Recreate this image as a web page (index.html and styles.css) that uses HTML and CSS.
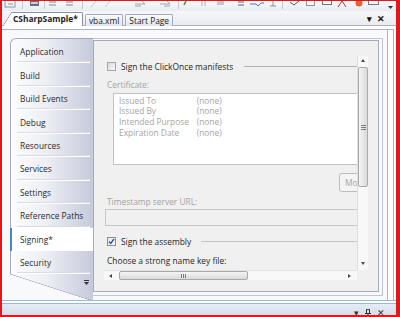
FILE: index.html
```html
<!DOCTYPE html>
<html lang="en">
<head>
  <meta charset="UTF-8">
  <title>CSharpSample - Signing</title>
  <link rel="stylesheet" href="styles.css">
</head>
<body>
<div class="frame">
  <!-- Toolbar (only the lower half is visible) -->
  <div class="toolbar">
    <svg width="394" height="10" viewBox="0 0 394 10">
      <rect x="3" y="-3" width="10" height="9" fill="none" stroke="#8a94a6"/>
      <line x1="6" y1="3" x2="11" y2="3" stroke="#8a94a6"/>
      <line x1="20.5" y1="0" x2="20.5" y2="8" stroke="#c3c7cf"/>
      <rect x="28" y="-2" width="9" height="7" fill="#6b6f7c"/>
      <rect x="29" y="1" width="7" height="2" fill="#c9ced8"/>
      <line x1="42.5" y1="0" x2="42.5" y2="8" stroke="#c3c7cf"/>
      <path d="M47 1h7M47 4h7" stroke="#7d8391"/>
      <path d="M64 1h7M64 4h7" stroke="#7d8391"/>
      <line x1="80.5" y1="0" x2="80.5" y2="8" stroke="#c3c7cf"/>
      <path d="M89 6l5-6M103 6l5-6" stroke="#c4c8d0"/>
      <path d="M133 3h10l-3-3M133 5h6" stroke="#a0a6b0" fill="none"/>
      <path d="M158 3h10l-3-3M162 5h6" stroke="#a0a6b0" fill="none"/>
      <line x1="176.5" y1="0" x2="176.5" y2="8" stroke="#c3c7cf"/>
      <path d="M182 4l2-4" stroke="#2f9a3a" stroke-width="1.5"/>
      <path d="M200 0v5M203 0v5" stroke="#a9adb6"/>
      <rect x="215" y="-1" width="7" height="5" fill="#c3c7d0"/>
      <path d="M236 1h6M236 4h6" stroke="#56606e"/>
      <path d="M248 3h6l2 2 3-3h3" stroke="#4b7cc4" fill="none"/>
      <path d="M271 0v5M268 5h6" stroke="#8b919c"/>
      <line x1="280.5" y1="0" x2="280.5" y2="8" stroke="#c3c7cf"/>
      <path d="M288 1l4 3 5-4" stroke="#4e5562" fill="none"/>
      <rect x="304.5" y="-2.5" width="8" height="7" fill="none" stroke="#8f96a2"/>
      <rect x="320.5" y="-2.5" width="9" height="6" fill="none" stroke="#6d7482"/>
      <path d="M336 6l4-6 4 6" stroke="#b0353a" fill="none"/>
      <circle cx="357" cy="2" r="3.5" fill="#e0622f"/>
      <rect x="366.5" y="-2.5" width="10" height="6" fill="none" stroke="#737a88"/>
      <path d="M386 5h5l-2.5 3z" fill="#333"/>
    </svg>
  </div>

  <!-- Document tabs -->
  <div class="tabstrip">
    <div class="tab active">CSharpSample*</div>
    <div class="tab">vba.xml</div>
    <div class="tab">Start Page</div>
    <div class="tab-tools"><span>▾</span><span>✕</span></div>
  </div>

  <div class="docwin">
    <div class="docedge">
      <div class="docbody">
        <div class="page">
          <nav class="sidebar">
            <div class="tabs">
              <div class="item">Application</div>
              <div class="item">Build</div>
              <div class="item">Build Events</div>
              <div class="item">Debug</div>
              <div class="item">Resources</div>
              <div class="item">Services</div>
              <div class="item">Settings</div>
              <div class="item">Reference Paths</div>
              <div class="item selected">Signing*</div>
              <div class="item">Security</div>
            </div>
            <div class="tail">
              <svg class="more" width="5" height="6" viewBox="0 0 5 6">
                <rect x="0" y="0" width="5" height="1" fill="#333"/>
                <path d="M0 2h5l-2.5 3z" fill="#333"/>
              </svg>
            </div>
          </nav>

          <div class="pane">
            <div class="content">
              <div class="viewport">
                <div class="scroller">
                  <div class="check-row first">
                    <span class="box"></span>
                    <span>Sign the ClickOnce manifests</span>
                    <span class="rule"></span>
                  </div>
                  <div class="field-label">Certificate:</div>
                  <div class="cert">
                    <div class="cert-row"><span class="key">Issued To</span><span>(none)</span></div>
                    <div class="cert-row"><span class="key">Issued By</span><span>(none)</span></div>
                    <div class="cert-row"><span class="key">Intended Purpose</span><span>(none)</span></div>
                    <div class="cert-row"><span class="key">Expiration Date</span><span>(none)</span></div>
                  </div>
                  <div class="more-btn">More Details...</div>
                  <div class="field-label stamp">Timestamp server URL:</div>
                  <div class="textbox"></div>
                  <div class="check-row second">
                    <span class="box checked">
                      <svg width="7" height="7" viewBox="0 0 7 7"><path d="M1 3.5l1.8 2L6 1" fill="none" stroke="#2b56ad" stroke-width="1.4"/></svg>
                    </span>
                    <span>Sign the assembly</span>
                    <span class="rule light"></span>
                  </div>
                  <div class="field-label dark">Choose a strong name key file:</div>
                </div>
              </div>

              <div class="vscroll">
                <div class="sb-btn up"><span class="tri tri-up"></span></div>
                <div class="vtrack">
                  <div class="vthumb"><span class="grip-h"></span></div>
                </div>
                <div class="sb-btn down"><span class="tri tri-down"></span></div>
              </div>

              <div class="hscroll">
                <div class="sb-btn left"><span class="tri tri-left"></span></div>
                <div class="htrack">
                  <div class="hthumb"><span class="grip-v"></span></div>
                </div>
                <div class="sb-btn right"><span class="tri tri-right"></span></div>
              </div>
              <div class="corner"></div>
            </div>
          </div>
        </div>
      </div>
    </div>
  </div>

  <div class="docklines"></div>
  <div class="dockbar">
    <span>▾</span>
    <svg class="pin" width="6" height="8" viewBox="0 0 6 8">
      <path d="M1.5 0.5h3v4h-3zM0 4.5h6M3 4.5v3.5" fill="none" stroke="#333"/>
    </svg>
    <span>✕</span>
  </div>
</div>
</body>
</html>
```

FILE: styles.css
```css
* {
  box-sizing: border-box;
  margin: 0;
  padding: 0;
}

body {
  width: 400px;
  height: 317px;
  overflow: hidden;
  font-family: "Segoe UI", "Open Sans", sans-serif;
  font-size: 8.4px;
  color: #222;
  background: #fff;
}

.frame {
  width: 400px;
  height: 317px;
  border: solid #e3161b;
  border-width: 1px 4px 2px 2px;
  display: flex;
  flex-direction: column;
  overflow: hidden;
}

/* Toolbar */
.toolbar {
  height: 10px;
  background: linear-gradient(#f7f8fa, #e9ecf1);
}

.toolbar svg {
  display: block;
}

/* Document tabs */
.tabstrip {
  height: 15px;
  display: flex;
  align-items: flex-end;
  padding: 0 11px 0 1px;
  background: linear-gradient(#f6f7f9, #e8eaef);
  box-shadow: inset 0 -1px #a9b0bf;
}

.tab {
  height: 12px;
  padding: 0 3px;
  margin-right: 2px;
  border: 1px solid #a3abbd;
  border-bottom: none;
  border-radius: 2px 2px 0 0;
  background: linear-gradient(#fbfbfc, #e1e5ec);
  line-height: 11px;
  white-space: nowrap;
}

/* active tab: slanted left edge drawn with gradients */
.tab.active {
  height: 14px;
  padding: 1px 4px 0 10px;
  border: solid #8690a8;
  border-width: 0 1px 0 0;
  border-radius: 0 2px 0 0;
  background:
    linear-gradient(#8690a8, #8690a8) no-repeat 9px 0 / 100% 1px,
    linear-gradient(to bottom right, transparent calc(50% - 0.6px), #8690a8 50%, #fff calc(50% + 0.6px)) no-repeat 0 0 / 9px 100%,
    linear-gradient(#fff, #fff) no-repeat 9px 0 / 100% 100%;
  font-weight: bold;
}

.tab-tools {
  margin-left: auto;
  align-self: center;
  display: flex;
  gap: 5px;
  font-size: 9px;
  font-weight: bold;
  color: #111;
}

/* Document window */
.docwin {
  flex: 1;
  display: flex;
  flex-direction: column;
  padding: 3px 2px 0 0;
  background: #fff;
}

.docedge {
  flex: 1;
  display: flex;
  border-top: 1px solid #a9b2c6;
  border-right: 1px solid #9cb6d6;
  padding-right: 5px;
}

.docbody {
  flex: 1;
  display: flex;
  padding: 8px 4px 0 8px;
  border-right: 1px solid #9cb6d6;
  background: #f9f9fb;
}

.page {
  display: flex;
  height: 262px;
  width: 100%;
}

/* Left tab list */
.sidebar {
  width: 83px;
  display: flex;
  flex-direction: column;
  border-top-left-radius: 6px;
  background: linear-gradient(to right, #fdfdfe, #eceef4 45%, #c5cadb);
}

.tabs {
  border: solid #a3aabd;
  border-width: 1px 0 0 1px;
  border-top-left-radius: 6px;
  padding-top: 1px;
}

.item {
  height: 23.45px;
  display: flex;
  align-items: center;
  padding-left: 9px;
  color: #2b2b2b;
  background:
    linear-gradient(#d8dbe5, #d8dbe5) no-repeat 6px calc(100% - 1px) / 73px 1px,
    linear-gradient(#fff, #fff) no-repeat 6px 100% / 73px 1px;
}

.item.selected {
  margin-left: -1px;
  padding-left: 10px;
  background: #fff;
  box-shadow: inset 2px 0 #3d86d8;
}

.tail {
  flex: 1;
  display: flex;
  justify-content: flex-end;
  align-items: flex-start;
  padding: 6px 4px 0 0;
  background: linear-gradient(to top right, #f9f9fb calc(50% - 0.6px), #a3aabd 50%, transparent calc(50% + 0.6px)) no-repeat 0 0 / 80px 100%;
}

.more {
  display: block;
}

/* Right pane */
.pane {
  width: 290px;
  height: 258px;
  border: solid #bfc5d3;
  border-width: 1px 1px 1px 0;
  padding: 1px 3px 3px 0;
}

.content {
  height: 252px;
  border: 1px solid #a7abb8;
  background: #f0f0f0;
  padding: 15px 10px 11px 10px;
  display: grid;
  grid-template-columns: 253px 11px;
  grid-template-rows: 214px 10px;
}

.viewport {
  overflow: hidden;
}

.scroller {
  width: 300px;
}

.check-row {
  height: 12px;
  display: flex;
  align-items: center;
  padding-left: 3px;
  white-space: nowrap;
  color: #1e1e1e;
}

.check-row.first {
  margin-top: 4px;
}

.check-row.second {
  margin-top: 9px;
}

.box {
  width: 9px;
  height: 9px;
  margin-right: 5px;
  border: 1px solid #a4a6a8;
  background: linear-gradient(135deg, #dcdcdc, #f7f7f7);
  display: flex;
  align-items: center;
  justify-content: center;
}

.box.checked {
  border-color: #8d8f92;
  background: linear-gradient(135deg, #e6e6e6, #fdfdfd);
}

.box svg {
  display: block;
}

.rule {
  flex: 1;
  height: 1px;
  margin-left: 11px;
  background: #b2b2b2;
}

.rule.light {
  margin-left: 10px;
  background: #c4c4c4;
}

.field-label {
  height: 12px;
  line-height: 12px;
  margin-top: 7px;
  padding-left: 3px;
  color: #a3a3a3;
  white-space: nowrap;
}

.field-label.stamp {
  margin-top: 4px;
}

.field-label.dark {
  margin-top: 8px;
  color: #1e1e1e;
}

.cert {
  width: 260px;
  height: 72px;
  margin: 2px 0 0 9px;
  padding: 1.7px 0 0 5px;
  border: 1px solid #c2c2c2;
  background: #fff;
  color: #a6a6a6;
}

.cert-row {
  display: flex;
  height: 10.7px;
  line-height: 10.7px;
  white-space: nowrap;
}

.cert-row .key {
  width: 77.7px;
}

.more-btn {
  width: 70px;
  height: 19px;
  margin: 8px 0 0 235px;
  padding-left: 5px;
  border: 1px solid #bdbdbd;
  border-radius: 3px;
  background: #f4f4f4;
  line-height: 17px;
  color: #a5a5a5;
  white-space: nowrap;
  overflow: hidden;
}

.textbox {
  width: 270px;
  height: 17px;
  margin: 1px 0 0 1px;
  border: 1px solid #c7c7c7;
  background: #f0f0f0;
}

/* Scroll bars */
.vscroll {
  display: flex;
  flex-direction: column;
  background: #f8f8f8;
  border-left: 1px solid #dedede;
}

.hscroll {
  display: flex;
  background: #f8f8f8;
  border-top: 1px solid #e2e2e2;
}

.sb-btn {
  display: flex;
  align-items: center;
  justify-content: center;
}

.sb-btn.up {
  height: 9px;
}

.sb-btn.down {
  height: 14px;
}

.sb-btn.left {
  width: 13px;
}

.sb-btn.right {
  width: 16px;
}

.vtrack {
  flex: 1;
  padding-top: 2px;
}

.htrack {
  flex: 1;
  padding-left: 2px;
}

.vthumb {
  height: 120px;
  border: 1px solid #a9a9a9;
  border-radius: 2px;
  background: linear-gradient(to right, #f5f5f5, #d9d9d9);
  display: flex;
  align-items: center;
  justify-content: center;
}

.hthumb {
  width: 129px;
  height: 100%;
  border: 1px solid #a9a9a9;
  border-radius: 2px;
  background: linear-gradient(#f5f5f5, #d9d9d9);
  display: flex;
  align-items: center;
  justify-content: center;
}

.grip-h {
  width: 5px;
  height: 5px;
  background: repeating-linear-gradient(#7c7c7c 0 1px, transparent 1px 2px);
}

.grip-v {
  width: 5px;
  height: 4px;
  background: repeating-linear-gradient(to right, #7c7c7c 0 1px, transparent 1px 2px);
}

.tri {
  width: 0;
  height: 0;
  border: 0 solid transparent;
}

.tri-up {
  border-width: 0 2.5px 3px;
  border-bottom-color: #4a4a4a;
}

.tri-down {
  border-width: 3px 2.5px 0;
  border-top-color: #4a4a4a;
}

.tri-left {
  border-width: 2.5px 3px 2.5px 0;
  border-right-color: #4a4a4a;
}

.tri-right {
  border-width: 2.5px 0 2.5px 3px;
  border-left-color: #4a4a4a;
}

.corner {
  background: #f0f0f0;
}

/* Docked tool window below */
.docklines {
  height: 4px;
  border-top: 1px solid #9cb6d6;
  border-bottom: 1px solid #9cb6d6;
  background: #fff;
}

.dockbar {
  height: 11px;
  display: flex;
  justify-content: flex-end;
  align-items: flex-start;
  gap: 6px;
  padding: 4px 11px 0 0;
  background: linear-gradient(#e6ecf4, #d4dde9);
  font-size: 9px;
  line-height: 10px;
  color: #333;
  overflow: hidden;
}

.pin {
  display: block;
  margin-top: 1px;
}
```
